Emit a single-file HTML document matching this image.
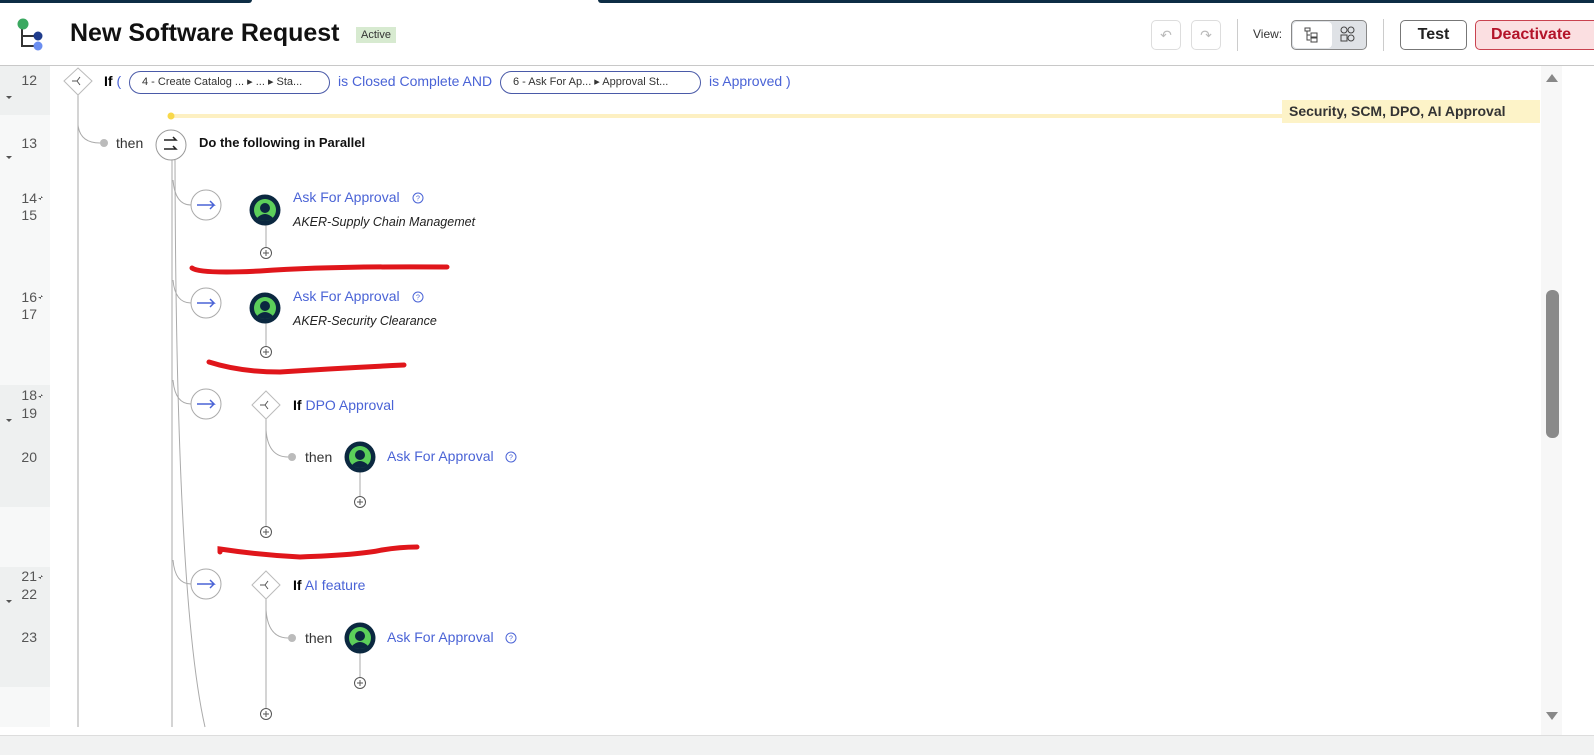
<!DOCTYPE html>
<html><head><meta charset="utf-8"><style>
body{margin:0;width:1594px;height:754px;overflow:hidden;background:#fff;font-family:"Liberation Sans","DejaVu Sans",sans-serif;position:relative}
.a{position:absolute;white-space:nowrap}
.ln{position:absolute;right:1557px;font-size:14px;color:#555;text-align:right}
.b{color:#4a63d6}
.btn{position:absolute;border:1px solid #999;border-radius:5px;background:#fff;box-sizing:border-box}
</style></head><body>
<div class="a" style="left:0;top:0;width:252px;height:3px;background:#0d2d45;border-radius:0 0 6px 0"></div>
<div class="a" style="left:598px;top:0;width:996px;height:3px;background:#0d2d45;border-radius:0 0 0 6px"></div>

<svg class="a" style="left:14px;top:16px" width="34" height="36">
<path d="M8 9 V30 H22 M8 20 H22" stroke="#333" stroke-width="2" fill="none"/>
<circle cx="9" cy="8" r="5.5" fill="#3aa860"/><circle cx="24" cy="20" r="4.5" fill="#1f3c8c"/><circle cx="24" cy="30" r="4.5" fill="#6b8ef0"/></svg>
<div class="a" style="left:70px;top:19px;font-size:25px;font-weight:bold;color:#111">New Software Request</div>
<div class="a" style="left:356px;top:27px;width:40px;height:16px;background:#d7ead0;font-size:11px;line-height:16px;text-align:center;color:#333">Active</div>

<div class="btn" style="left:1151px;top:20px;width:30px;height:30px;border-color:#ddd;color:#bbb;font-size:14px;text-align:center;line-height:28px">↶</div>
<div class="btn" style="left:1191px;top:20px;width:30px;height:30px;border-color:#ddd;color:#bbb;font-size:14px;text-align:center;line-height:28px">↷</div>
<div class="a" style="left:1237px;top:19px;width:1px;height:32px;background:#ccc"></div>
<div class="a" style="left:1253px;top:27px;font-size:12px;color:#333">View:</div>
<div class="btn" style="left:1291px;top:20px;width:76px;height:30px;background:#dfe2e6;border-color:#888"></div>
<div class="a" style="left:1293px;top:22px;width:39px;height:26px;background:#fff;border-radius:4px"></div>
<svg class="a" style="left:1304px;top:27px" width="14" height="16"><path d="M1 1h5v3H1zM3 4v9h3M3 8h3M7 6h6v4H7zM7 11h6v4H7z" stroke="#444" fill="none" stroke-width="1"/></svg>
<svg class="a" style="left:1340px;top:26px" width="16" height="16"><circle cx="4" cy="4" r="3" stroke="#444" fill="none"/><circle cx="11" cy="4" r="3" stroke="#444" fill="none"/><rect x="1" y="9" width="6" height="6" stroke="#444" fill="none"/><circle cx="11" cy="12" r="3" stroke="#444" fill="none"/></svg>
<div class="a" style="left:1383px;top:19px;width:1px;height:32px;background:#ccc"></div>
<div class="btn" style="left:1400px;top:20px;width:67px;height:30px;border-color:#777;font-size:16px;font-weight:bold;text-align:center;line-height:28px;color:#222">Test</div>
<div class="btn" style="left:1475px;top:20px;width:130px;height:30px;border-color:#c9424f;background:#fbdfe1;font-size:16px;font-weight:bold;line-height:28px;color:#b3142a;padding-left:15px">Deactivate</div>
<div class="a" style="left:0;top:65px;width:1594px;height:1px;background:#c8c8c8"></div>

<!-- gutter -->
<div class="a" style="left:0;top:66px;width:50px;height:661px;background:#f7f8f8"></div>
<div class="a" style="left:0;top:66px;width:50px;height:49px;background:#eef0f0"></div>
<div class="a" style="left:0;top:385px;width:50px;height:122px;background:#eef0f0"></div>
<div class="a" style="left:0;top:567px;width:50px;height:120px;background:#eef0f0"></div>
<div class="ln" style="top:72px">12</div>
<div class="ln" style="top:135px">13</div>
<div class="ln" style="top:190px">14</div><div class="ln" style="top:207px">15</div>
<div class="ln" style="top:289px">16</div><div class="ln" style="top:306px">17</div>
<div class="ln" style="top:387px">18</div><div class="ln" style="top:405px">19</div>
<div class="ln" style="top:449px">20</div>
<div class="ln" style="top:568px">21</div><div class="ln" style="top:586px">22</div>
<div class="ln" style="top:629px">23</div>
<svg class="a" style="left:0;top:66px" width="50" height="661" fill="#555">
<path d="M6 30l3 3 3-3z M6 90l3 3 3-3z M6 353l3 3 3-3z M6 534l3 3 3-3z"/>
<path d="M38 132h5l-2-2v4zM38 231h5l-2-2v4zM38 330h5l-2-2v4zM38 511h5l-2-2v4z"/>
</svg>

<!-- diagram -->
<svg class="a" style="left:0;top:0" width="1594" height="754">
<g stroke="#aaa" fill="none" stroke-width="1">
<line x1="78" y1="93" x2="78" y2="727"/>
<path d="M78 125 Q80 143 100 143"/>
<line x1="172" y1="160" x2="172" y2="727"/>
<path d="M175 160 Q176 600 205 727"/>
<path d="M173 180 Q175 205 191 205"/><path d="M173 280 Q175 303 191 303"/>
<path d="M173 380 Q175 404 191 404"/><path d="M173 560 Q175 584 191 584"/>
<line x1="266" y1="225" x2="266" y2="247"/><line x1="266" y1="323" x2="266" y2="346"/>
<line x1="266" y1="417" x2="266" y2="526"/><path d="M266 430 Q268 457 288 457"/>
<line x1="360" y1="472" x2="360" y2="496"/>
<line x1="266" y1="597" x2="266" y2="708"/><path d="M266 610 Q268 638 288 638"/>
<line x1="360" y1="653" x2="360" y2="677"/>
</g>
<g fill="#bbb"><circle cx="104" cy="143" r="4"/><circle cx="292" cy="457" r="4"/><circle cx="292" cy="638" r="4"/></g>
<!-- diamonds -->
<g stroke="#bbb" fill="#fff">
<path d="M78 68 L92 81 L78 95 L64 81Z"/>
<path d="M266 391 L280 405 L266 419 L252 405Z"/>
<path d="M266 571 L280 585 L266 599 L252 585Z"/>
</g>
<g stroke="#555" fill="none" stroke-width="1">
<path d="M72 81h5l3-4M77 81l3 4"/><path d="M260 405h5l3-4M265 405l3 4"/><path d="M260 585h5l3-4M265 585l3 4"/>
</g>
<!-- parallel -->
<circle cx="171" cy="145" r="15" stroke="#999" fill="#fff"/>
<path d="M164 140h12l-3-3M164 149h12l-3-3" stroke="#222" fill="none" stroke-width="1.5"/>
<!-- arrows -->
<g stroke="#aaa" fill="#fff"><circle cx="206" cy="205" r="15"/><circle cx="206" cy="303" r="15"/><circle cx="206" cy="404" r="15"/><circle cx="206" cy="584" r="15"/></g>
<g stroke="#4a63d6" fill="none" stroke-width="1.5">
<path d="M197 205h17l-4-4M214 205l-4 4"/><path d="M197 303h17l-4-4M214 303l-4 4"/><path d="M197 404h17l-4-4M214 404l-4 4"/><path d="M197 584h17l-4-4M214 584l-4 4"/>
</g>
<!-- avatars -->
<g id="av">
<circle cx="265" cy="210" r="15.5" fill="#0b2840"/><circle cx="265" cy="210" r="11" fill="#5ccf5a"/><circle cx="265" cy="208" r="5" fill="#0b2840"/><path d="M257 218 Q265 210 273 218 Q265 224 257 218Z" fill="#0b2840"/>
</g>
<use href="#av" y="98"/><use href="#av" x="95" y="247"/><use href="#av" x="95" y="428"/>
<!-- plus -->
<g stroke="#555" fill="#fff"><circle cx="266" cy="253" r="5.5"/><circle cx="266" cy="352" r="5.5"/><circle cx="360" cy="502" r="5.5"/><circle cx="266" cy="532" r="5.5"/><circle cx="360" cy="683" r="5.5"/><circle cx="266" cy="714" r="5.5"/></g>
<g stroke="#555"><path d="M263 253h6M266 250v6M263 352h6M266 349v6M357 502h6M360 499v6M263 532h6M266 529v6M357 683h6M360 680v6M263 714h6M266 711v6"/></g>
<!-- ? icons -->
<g stroke="#4a63d6" fill="none"><circle cx="418" cy="198" r="5"/><circle cx="418" cy="297" r="5"/><circle cx="511" cy="457" r="5"/><circle cx="511" cy="638" r="5"/></g>
<g fill="#4a63d6" font-size="7" font-family="Liberation Sans" text-anchor="middle"><text x="418" y="200.5">?</text><text x="418" y="299.5">?</text><text x="511" y="459.5">?</text><text x="511" y="640.5">?</text></g>
<!-- yellow -->
<line x1="171" y1="116" x2="1540" y2="116" stroke="#fdf0c2" stroke-width="4"/>
<circle cx="171" cy="116" r="3.5" fill="#f8d84a"/>
<!-- red scribbles -->
<g stroke="#e0161b" stroke-width="5" fill="none" stroke-linecap="round">
<path d="M192 268 Q200 274 260 271 Q330 266 447 267"/>
<path d="M209 362 Q240 372 280 372 Q340 368 404 365"/>
<path d="M220 552 L220 549 Q260 555 300 557 Q360 555 382 550 Q400 547 417 547"/>
</g>
<!-- scrollbar -->
<rect x="1541" y="66" width="21" height="669" fill="#f7f7f7"/>
<path d="M1546 82 L1552 74 L1558 82Z" fill="#888"/>
<rect x="1546" y="290" width="13" height="148" rx="6" fill="#8a8a8a"/>
<path d="M1546 712 L1552 720 L1558 712Z" fill="#888"/>
</svg>

<div class="a" style="left:104px;top:73px;font-size:14px"><b>If</b> <span class="b">(</span></div>
<div class="a" style="left:129px;top:71px;width:201px;height:23px;border:1px solid #4a5aa8;border-radius:12px;box-sizing:border-box;font-size:11px;line-height:21px;padding-left:12px;color:#333">4 - Create Catalog ... ▸ ... ▸ Sta...</div>
<div class="a b" style="left:338px;top:73px;font-size:14px">is Closed Complete AND</div>
<div class="a" style="left:500px;top:71px;width:201px;height:23px;border:1px solid #4a5aa8;border-radius:12px;box-sizing:border-box;font-size:11px;line-height:21px;padding-left:12px;color:#333">6 - Ask For Ap... ▸ Approval St...</div>
<div class="a b" style="left:709px;top:73px;font-size:14px">is Approved )</div>
<div class="a" style="left:1282px;top:100px;width:258px;height:23px;background:#fdf3c8;font-size:14px;font-weight:bold;line-height:23px;padding-left:7px;box-sizing:border-box;color:#333">Security, SCM, DPO, AI Approval</div>

<div class="a" style="left:116px;top:135px;font-size:14px;color:#333">then</div>
<div class="a" style="left:199px;top:135px;font-size:13px;font-weight:bold;color:#111">Do the following in Parallel</div>
<div class="a b" style="left:293px;top:189px;font-size:14px">Ask For Approval</div>
<div class="a" style="left:293px;top:215px;font-size:12.5px;font-style:italic;color:#222">AKER-Supply Chain Managemet</div>
<div class="a b" style="left:293px;top:288px;font-size:14px">Ask For Approval</div>
<div class="a" style="left:293px;top:314px;font-size:12.5px;font-style:italic;color:#222">AKER-Security Clearance</div>
<div class="a" style="left:293px;top:397px;font-size:14px"><b>If</b> <span class="b">DPO Approval</span></div>
<div class="a" style="left:305px;top:449px;font-size:14px;color:#333">then</div>
<div class="a b" style="left:387px;top:448px;font-size:14px">Ask For Approval</div>
<div class="a" style="left:293px;top:577px;font-size:14px"><b>If</b> <span class="b">AI feature</span></div>
<div class="a" style="left:305px;top:630px;font-size:14px;color:#333">then</div>
<div class="a b" style="left:387px;top:629px;font-size:14px">Ask For Approval</div>

<div class="a" style="left:0;top:735px;width:1594px;height:19px;background:#f1f2f2;border-top:1px solid #ddd"></div>
</body></html>
